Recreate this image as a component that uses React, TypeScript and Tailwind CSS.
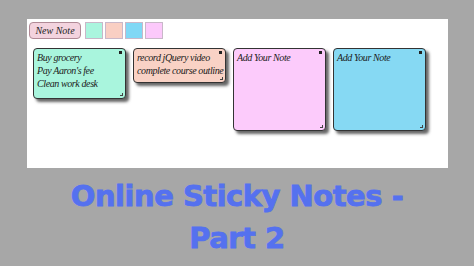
import React from "react";

type Note = { color: string; lines: string[]; h: string };

const notes: Note[] = [
  { color: "bg-[#a9f5dd]", lines: ["Buy grocery", "Pay Aaron's fee", "Clean work desk"], h: "h-[51px]" },
  { color: "bg-[#f9d2c5]", lines: ["record jQuery video", "complete course outline"], h: "h-[35px]" },
  { color: "bg-[#fccbfb]", lines: ["Add Your Note"], h: "h-[83px]" },
  { color: "bg-[#86d9f3]", lines: ["Add Your Note"], h: "h-[83px]" },
];

const swatches = ["bg-[#aaf5de]", "bg-[#f9cfc3]", "bg-[#80d8f5]", "bg-[#fcc9fb]"];

function StickyNote({ note }: { note: Note }) {
  return (
    <div
      className={`relative w-[93px] ${note.h} ${note.color} rounded-[4px] border border-[#333] shadow-[3px_3px_3px_#666] pl-[3px] pt-[2px]`}
    >
      {note.lines.map((l) => (
        <div key={l} className="text-[10px] leading-[13px] italic tracking-[-0.4px] text-[#1a1a1a] whitespace-nowrap">
          {l}
        </div>
      ))}
      <span className="absolute top-[2px] right-[3px] w-[3px] h-[3px] bg-[#222]" />
      <span className="absolute bottom-[2px] right-[2px] w-[3px] h-[3px] border-r border-b border-[#444]" />
    </div>
  );
}

export default function App() {
  return (
    <div className="w-[474px] h-[266px] bg-[#a7a7a7] overflow-hidden pt-[19px]">
      <div
        className="ml-[27px] w-[421px] h-[149px] bg-white pl-[2px] pt-[3px]"
        style={{ fontFamily: '"Liberation Serif", serif' }}
      >
        <div className="flex items-center gap-[4px]">
          <div className="w-[52px] h-[17px] rounded-[4px] bg-[#f3d3de] border border-[#b08a96] flex items-center justify-center text-[10px] italic text-[#222]">
            New Note
          </div>
          <div className="flex gap-[2px]">
            {swatches.map((s) => (
              <div key={s} className={`w-[18px] h-[17px] ${s} border border-[#c9b8c9]`} />
            ))}
          </div>
        </div>
        <div className="flex items-start mt-[9px] ml-[4px] gap-[7px]">
          {notes.map((n, i) => (
            <StickyNote key={i} note={n} />
          ))}
        </div>
      </div>
      <div
        className="text-center text-[#5571ef] text-[29px] leading-[42px] font-black tracking-[-0.5px] mt-[7px] [-webkit-text-stroke:0.8px_#5571ef]"
        style={{ fontFamily: '"DejaVu Sans", sans-serif' }}
      >
        <div>Online Sticky Notes -</div>
        <div>Part 2</div>
      </div>
    </div>
  );
}
